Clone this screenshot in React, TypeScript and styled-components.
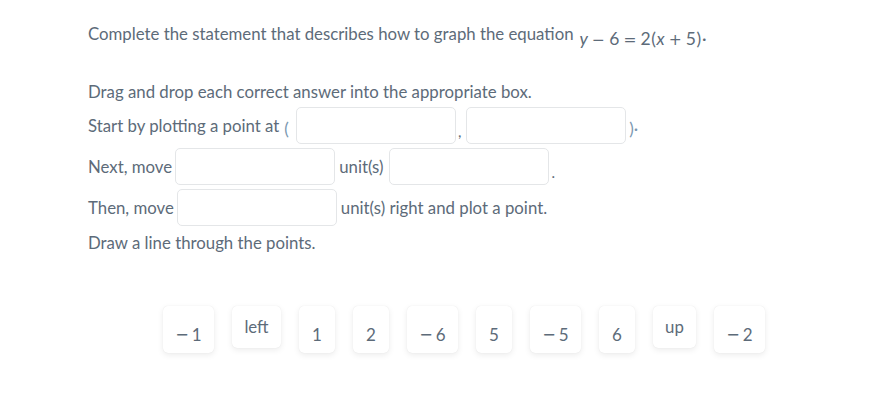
import React from "react";
import styled, {createGlobalStyle} from "styled-components";

const GlobalStyle = createGlobalStyle`
  html, body {
    margin: 0;
    padding: 0;
    background: #fff;
  }
  body {
    font-family: "Lato", "Noto Sans", sans-serif;
    color: #5d6b79;
  }
`;

const Page = styled.div`
  padding: 22px 0 0 88px;
  width: 873px;
  height: 420px;
  box-sizing: border-box;
`;

const Title = styled.div`
  font-size: 16.8px;
  line-height: 24px;
  display: flex;
  align-items: baseline;
  white-space: nowrap;
`;

const MathInline = styled.span`
  font-family: "Lato", sans-serif;
  font-size: 17.5px;
  margin-left: 6px;
  position: relative;
  top: 5px;
  letter-spacing: 0.6px;
`;

const Var = styled.i`
  font-style: italic;
`;

const Op = styled.span`
  font-family: "DejaVu Sans", sans-serif;
  font-size: 15.5px;
  margin: 0 3.5px;
`;

const Instruction = styled.div`
  font-size: 16.8px;
  line-height: 24px;
  margin-top: 33px;
`;

const Rows = styled.div`
  display: flex;
  flex-direction: column;
  gap: 4px;
  margin-top: 3px;
`;

const Row = styled.div`
  display: flex;
  align-items: center;
  font-size: 16.8px;
  height: 37px;
  white-space: nowrap;
`;

const Text = styled.span<{ $left?: number; $right?: number }>`
  margin-left: ${({ $left }) => $left ?? 0}px;
  margin-right: ${({ $right }) => $right ?? 3}px;
`;

const Paren = styled.span<{ $left?: number; $right?: number }>`
  font-family: "Lato", sans-serif;
  font-size: 17px;
  margin: 6px ${({ $right }) => $right ?? 3}px 0 ${({ $left }) => $left ?? 3}px;
  color: #7a97b0;
`;

const DropBox = styled.div`
  width: 160px;
  flex-shrink: 0;
  height: 37px;
  box-sizing: border-box;
  border: 1px solid #e4e6e8;
  border-radius: 5px;
  background: #fff;
`;

const Punct = styled.span`
  font-family: "Lato", sans-serif;
  font-size: 15px;
  margin: 10px 5px 0 2px;
`;

const Final = styled.div`
  font-size: 16.8px;
  line-height: 24px;
  margin-top: 5px;
`;

const Tray = styled.div`
  display: flex;
  align-items: flex-start;
  gap: 18px;
  margin: 51px 0 0 75px;
`;

const Tile = styled.div<{ $math?: boolean; $w: number }>`
  width: ${({ $w }) => $w}px;
  flex-shrink: 0;
  height: ${({ $math }) => ($math ? 47 : 42)}px;
  padding: ${({ $math }) => ($math ? "9px 0 0" : "0 0 2px")};
  box-sizing: border-box;
  background: #fff;
  border-radius: 5px;
  box-shadow: 0 2px 6px rgba(0, 0, 0, 0.08), 0 0 1px rgba(0, 0, 0, 0.1);
  display: flex;
  align-items: center;
  justify-content: center;
  font-size: ${({ $math }) => ($math ? 17 : 16.8)}px;
  font-family: "Lato", sans-serif;
`;

const Minus = styled.span`
  font-family: "DejaVu Sans", sans-serif;
  font-size: 16px;
  margin-right: 3px;
`;

const tiles: { label: string; neg?: boolean; math: boolean; w: number }[] = [
  { label: "1", neg: true, math: true, w: 51 },
  { label: "left", math: false, w: 49 },
  { label: "1", math: true, w: 36 },
  { label: "2", math: true, w: 36 },
  { label: "6", neg: true, math: true, w: 51 },
  { label: "5", math: true, w: 36 },
  { label: "5", neg: true, math: true, w: 51 },
  { label: "6", math: true, w: 36 },
  { label: "up", math: false, w: 43 },
  { label: "2", neg: true, math: true, w: 51 },
];

export default function App() {
  return (
    <>
      <GlobalStyle />
      <Page>
        <Title>
          Complete the statement that describes how to graph the equation
          <MathInline>
            <Var>y</Var>
            <Op>−</Op>6<Op>=</Op>2(<Var>x</Var>
            <Op>+</Op>5)·
          </MathInline>
        </Title>
        <Instruction>Drag and drop each correct answer into the appropriate box.</Instruction>
        <Rows>
          <Row>
            <Text $right={0}>Start by plotting a point at</Text>
            <Paren $left={5} $right={7}>(</Paren>
            <DropBox />
            <Punct>,</Punct>
            <DropBox />
            <Paren>)·</Paren>
          </Row>
          <Row>
            <Text>Next, move</Text>
            <DropBox />
            <Text $left={4} $right={6}>unit(s)</Text>
            <DropBox />
            <Punct>.</Punct>
          </Row>
          <Row>
            <Text>Then, move</Text>
            <DropBox />
            <Text $left={4}>unit(s) right and plot a point.</Text>
          </Row>
        </Rows>
        <Final>Draw a line through the points.</Final>
        <Tray>
          {tiles.map((t, i) => (
            <Tile key={i} $math={t.math} $w={t.w}>
              {t.neg && <Minus>−</Minus>}
              {t.label}
            </Tile>
          ))}
        </Tray>
      </Page>
    </>
  );
}
